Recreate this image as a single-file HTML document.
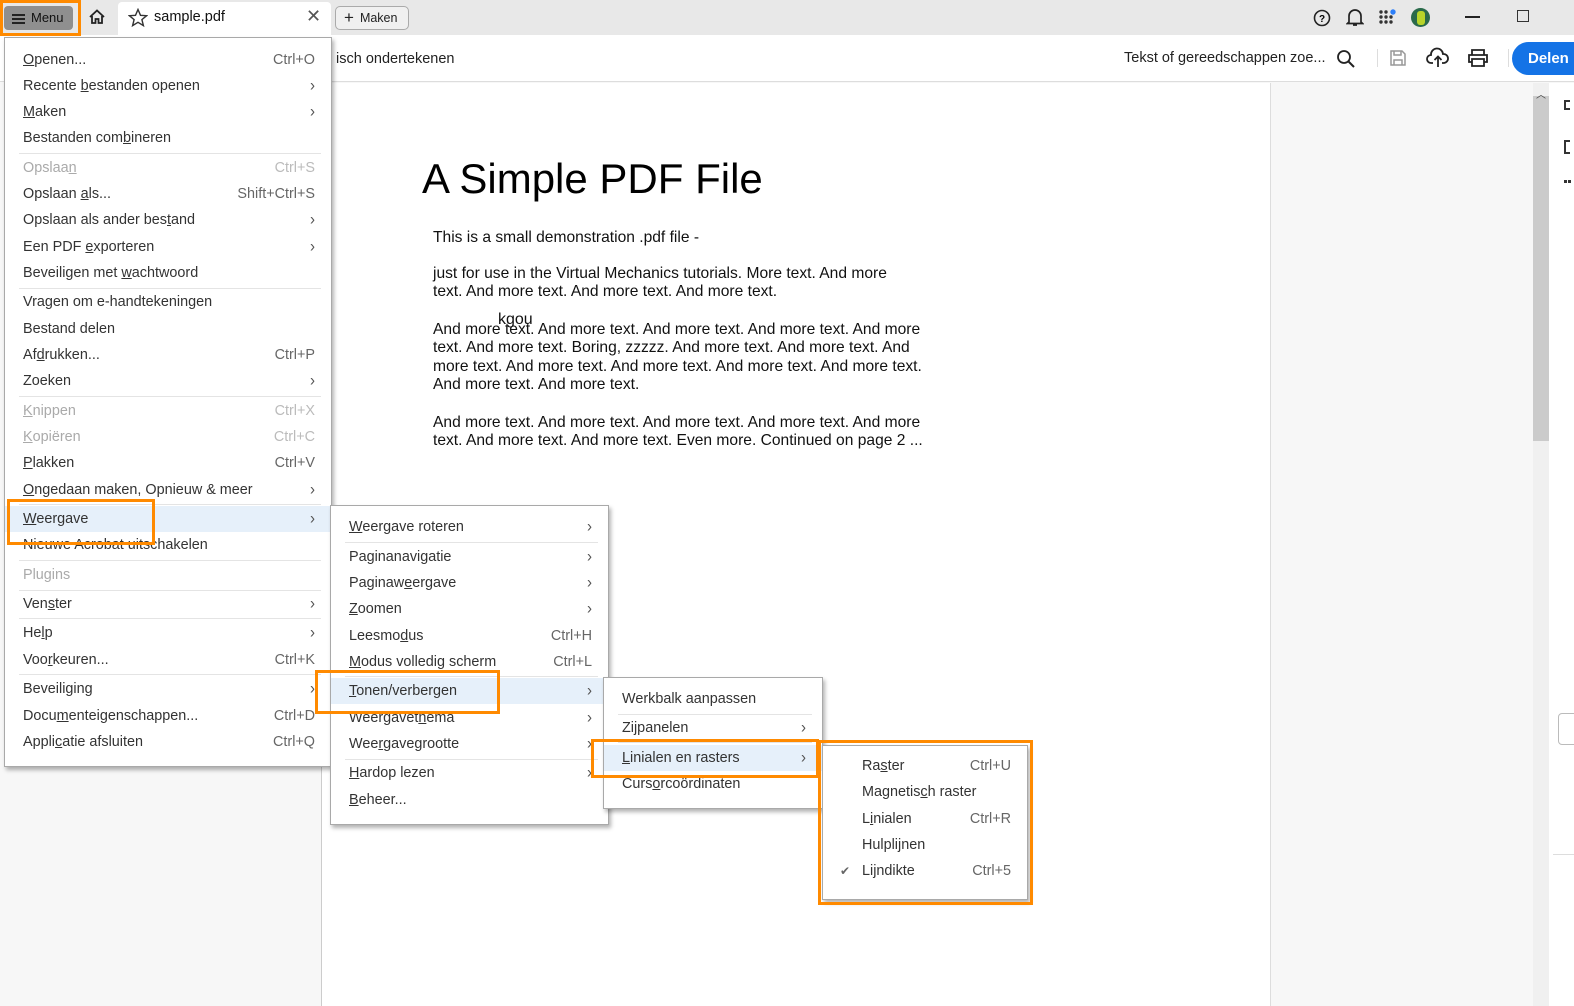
<!DOCTYPE html>
<html><head><meta charset="utf-8"><style>
*{margin:0;padding:0;box-sizing:border-box}
body{width:1574px;height:1006px;overflow:hidden;position:relative;font-family:"Liberation Sans",Arial,sans-serif;background:#f7f7f7;color:#222}
.abs{position:absolute}
.menu{position:absolute;background:#fff;border:1px solid #a9a9a9;box-shadow:2px 3px 4px rgba(0,0,0,.3)}
.i{position:absolute;left:0;right:0;height:26px;line-height:26px;font-size:14.4px;color:#333;padding-left:18px;white-space:nowrap}
.i .s{position:absolute;right:16px;top:0;color:#666}
.i .a{position:absolute;right:16px;top:0;color:#555;font-size:15px;transform:scaleY(1.1)}
.d{color:#aaa}.d .s{color:#bbb}
.sep{position:absolute;left:14px;right:10px;height:1px;background:#e4e4e4}
.hl{background:#e6f0fa}
.ob{position:absolute;border:3px solid #ff8a00}
.pt{position:absolute;font-size:15.6px;color:#111;line-height:18.3px;left:433px;white-space:nowrap}
</style></head><body>
<!-- top bar -->
<div class="abs" style="left:0;top:0;width:1574px;height:35px;background:#e8e8e8"></div>
<div class="abs" style="left:4px;top:6px;width:69px;height:24px;background:#8f8f8f;border-radius:4px;font-size:13px;line-height:24px;color:#111;padding-left:8px">
<span style="display:inline-block;width:13px;vertical-align:middle;border-top:2px solid #222;border-bottom:2px solid #222;height:10px;position:relative;margin-right:6px"><span style="position:absolute;left:0;right:0;top:2px;height:2px;background:#222"></span></span>Menu</div>
<svg class="abs" style="left:88px;top:8px" width="18" height="18" viewBox="0 0 18 18"><path d="M2 9 L9 2.5 L16 9 M4 8 V15 H7.5 V11 H10.5 V15 H14 V8" fill="none" stroke="#222" stroke-width="1.8"/></svg>
<div class="abs" style="left:118px;top:2px;width:213px;height:33px;background:#fff;border-radius:4px 4px 0 0"></div>
<svg class="abs" style="left:128px;top:8px" width="20" height="20" viewBox="0 0 20 20"><path d="M10 1.5 L12.5 7.3 L18.6 7.7 L13.9 11.6 L15.4 17.6 L10 14.3 L4.6 17.6 L6.1 11.6 L1.4 7.7 L7.5 7.3 Z" fill="none" stroke="#333" stroke-width="1.4"/></svg>
<div class="abs" style="left:154px;top:9px;font-size:14.5px;color:#111">sample.pdf</div>
<div class="abs" style="left:306px;top:6px;font-size:18px;color:#555">✕</div>
<div class="abs" style="left:335px;top:6px;width:74px;height:24px;border:1px solid #aaa;border-radius:5px;background:#f0f0f0;font-size:12.5px;line-height:22px;padding-left:8px;color:#222"><span style="font-size:17px;vertical-align:-1px;margin-right:6px">+</span>Maken</div>
<svg class="abs" style="left:1313px;top:9px" width="18" height="18" viewBox="0 0 18 18"><circle cx="9" cy="9" r="7.5" fill="none" stroke="#222" stroke-width="1.6"/><text x="9" y="13" font-size="10" text-anchor="middle" font-family="Liberation Sans" font-weight="bold">?</text></svg>
<svg class="abs" style="left:1346px;top:8px" width="18" height="20" viewBox="0 0 18 20"><path d="M3 14 V8 A6 6 0 0 1 15 8 V14 L16.5 15.5 H1.5 Z M7 17 H11" fill="none" stroke="#222" stroke-width="1.7"/></svg>
<svg class="abs" style="left:1378px;top:9px" width="20" height="18"><g fill="#333"><circle cx="3" cy="3" r="1.7"/><circle cx="8" cy="3" r="1.7"/><circle cx="3" cy="8" r="1.7"/><circle cx="8" cy="8" r="1.7"/><circle cx="13" cy="8" r="1.7"/><circle cx="3" cy="13" r="1.7"/><circle cx="8" cy="13" r="1.7"/><circle cx="13" cy="13" r="1.7"/></g><circle cx="15" cy="3" r="2.7" fill="#2d7ff9"/></svg>
<div class="abs" style="left:1411px;top:8px;width:19px;height:19px;border-radius:50%;background:#2a6a4a;overflow:hidden"><div style="margin:3px 0 0 6px;width:8px;height:14px;background:#b8d42a;border-radius:3px"></div></div>
<div class="abs" style="left:1465px;top:16px;width:15px;height:2px;background:#222"></div>
<div class="abs" style="left:1517px;top:10px;width:12px;height:12px;border:1.5px solid #333"></div>
<!-- toolbar -->
<div class="abs" style="left:0;top:35px;width:1574px;height:47px;background:#fff;border-bottom:1px solid #ddd"></div>
<div class="abs" style="left:336px;top:51px;font-size:14.5px;color:#222">isch ondertekenen</div>
<div class="abs" style="left:1124px;top:50px;font-size:14.5px;color:#222">Tekst of gereedschappen zoe...</div>
<svg class="abs" style="left:1336px;top:49px" width="20" height="20"><circle cx="8" cy="8" r="6" fill="none" stroke="#222" stroke-width="1.8"/><path d="M12.5 12.5 L18 18" stroke="#222" stroke-width="2"/></svg>
<div class="abs" style="left:1377px;top:49px;width:1px;height:18px;background:#ddd"></div>
<svg class="abs" style="left:1389px;top:49px" width="18" height="18"><path d="M2 2 H13 L16 5 V16 H2 Z M5 2 V6 H12 V2 M5 16 V11 H13 V16" fill="none" stroke="#999" stroke-width="1.5"/></svg>
<svg class="abs" style="left:1426px;top:47px" width="24" height="22"><path d="M7 16 H5 A4 4 0 0 1 5 8 A6 6 0 0 1 17 7 A4.5 4.5 0 0 1 18 16 H16 M12 20 V10 M8.5 13 L12 9.5 L15.5 13" fill="none" stroke="#222" stroke-width="1.8"/></svg>
<svg class="abs" style="left:1467px;top:48px" width="22" height="20"><path d="M5 7 V2 H17 V7 M5 14 H2 V7 H20 V14 H17 M5 11 H17 V18 H5 Z" fill="none" stroke="#222" stroke-width="1.8"/></svg>
<div class="abs" style="left:1508px;top:49px;width:1px;height:18px;background:#ddd"></div>
<div class="abs" style="left:1512px;top:42px;width:80px;height:33px;background:#1473e6;border-radius:17px;color:#fff;font-weight:bold;font-size:15px;line-height:33px;padding-left:16px">Delen</div>
<!-- page area -->
<div class="abs" style="left:321px;top:83px;width:950px;height:923px;background:#fff;border-left:1px solid #ccc;border-right:1px solid #ddd"></div>
<div class="abs" style="left:1533px;top:83px;width:16px;height:923px;background:#f0f0f0"></div>
<div class="abs" style="left:1533px;top:96px;width:16px;height:345px;background:#cbcbcb"></div>
<div class="abs" style="left:1536px;top:86px;font-size:10px;color:#444">︿</div>
<div class="abs" style="left:1549px;top:83px;width:25px;height:923px;background:#fff"></div>
<div class="abs" style="left:1564px;top:100px;width:6px;height:10px;border:2px solid #333;border-right:none"></div>
<div class="abs" style="left:1564px;top:140px;width:6px;height:14px;border:2px solid #333;border-right:none"></div>
<div class="abs" style="left:1564px;top:180px;width:4px;height:12px;border-top:3px dotted #333"></div>
<div class="abs" style="left:1558px;top:713px;width:20px;height:32px;border:1px solid #bbb;border-radius:4px;background:#fff"></div>
<div class="abs" style="left:1553px;top:854px;width:21px;height:1px;background:#ddd"></div>
<!-- pdf text -->
<div class="abs" style="left:422px;top:155px;font-size:42px;color:#000">A Simple PDF File</div>
<div class="pt" style="top:229px">This is a small demonstration .pdf file -</div>
<div class="pt" style="top:265px">just for use in the Virtual Mechanics tutorials. More text. And more<br>text. And more text. And more text. And more text.</div>
<div class="pt" style="top:321px">And more text. And more text. And more text. And more text. And more<br>text. And more text. Boring, zzzzz. And more text. And more text. And<br>more text. And more text. And more text. And more text. And more text.<br>And more text. And more text.</div>
<div class="abs" style="left:498px;top:311px;font-size:16px;color:#111">kgou</div>
<div class="pt" style="top:414px">And more text. And more text. And more text. And more text. And more<br>text. And more text. And more text. Even more. Continued on page 2 ...</div>

<!-- main menu -->
<div class="menu" style="left:4px;top:37px;width:328px;height:730px">
<div class="i" style="top:9px"><u>O</u>penen...<span class="s">Ctrl+O</span></div>
<div class="i" style="top:35px">Recente <u>b</u>estanden openen<span class="a">›</span></div>
<div class="i" style="top:61px"><u>M</u>aken<span class="a">›</span></div>
<div class="i" style="top:87px">Bestanden com<u>b</u>ineren</div>
<div class="sep" style="top:115px"></div>
<div class="i d" style="top:117px">Opslaa<u>n</u><span class="s">Ctrl+S</span></div>
<div class="i" style="top:143px">Opslaan <u>a</u>ls...<span class="s">Shift+Ctrl+S</span></div>
<div class="i" style="top:169px">Opslaan als ander bes<u>t</u>and<span class="a">›</span></div>
<div class="i" style="top:196px">Een PDF <u>e</u>xporteren<span class="a">›</span></div>
<div class="i" style="top:222px">Beveiligen met <u>w</u>achtwoord</div>
<div class="sep" style="top:250px"></div>
<div class="i" style="top:251px">Vragen om e-handtekeningen</div>
<div class="i" style="top:278px">Bestand delen</div>
<div class="i" style="top:304px">Af<u>d</u>rukken...<span class="s">Ctrl+P</span></div>
<div class="i" style="top:330px">Zoeken<span class="a">›</span></div>
<div class="sep" style="top:358px"></div>
<div class="i d" style="top:360px"><u>K</u>nippen<span class="s">Ctrl+X</span></div>
<div class="i d" style="top:386px"><u>K</u>opiëren<span class="s">Ctrl+C</span></div>
<div class="i" style="top:412px"><u>P</u>lakken<span class="s">Ctrl+V</span></div>
<div class="i" style="top:439px"><u>O</u>ngedaan maken, Opnieuw &amp; meer<span class="a">›</span></div>
<div class="sep" style="top:466px"></div>
<div class="i hl" style="top:468px"><u>W</u>eergave<span class="a">›</span></div>
<div class="i" style="top:494px">Nieuwe Acrobat uitschakelen</div>
<div class="sep" style="top:522px"></div>
<div class="i d" style="top:524px">Plugins</div>
<div class="sep" style="top:552px"></div>
<div class="i" style="top:553px">Ven<u>s</u>ter<span class="a">›</span></div>
<div class="sep" style="top:580px"></div>
<div class="i" style="top:582px">He<u>l</u>p<span class="a">›</span></div>
<div class="i" style="top:609px">Voo<u>r</u>keuren...<span class="s">Ctrl+K</span></div>
<div class="sep" style="top:636px"></div>
<div class="i" style="top:638px">Beveiliging<span class="a">›</span></div>
<div class="i" style="top:665px">Docu<u>m</u>enteigenschappen...<span class="s">Ctrl+D</span></div>
<div class="i" style="top:691px">Appli<u>c</u>atie afsluiten<span class="s">Ctrl+Q</span></div>
</div>

<!-- submenu 2 -->
<div class="menu" style="left:330px;top:505px;width:279px;height:320px">
<div class="i" style="top:8px"><u>W</u>eergave roteren<span class="a">›</span></div>
<div class="sep" style="top:36px"></div>
<div class="i" style="top:38px">Paginanavigatie<span class="a">›</span></div>
<div class="i" style="top:64px">Paginaw<u>e</u>ergave<span class="a">›</span></div>
<div class="i" style="top:90px"><u>Z</u>oomen<span class="a">›</span></div>
<div class="i" style="top:117px">Leesmo<u>d</u>us<span class="s">Ctrl+H</span></div>
<div class="i" style="top:143px"><u>M</u>odus volledig scherm<span class="s">Ctrl+L</span></div>
<div class="sep" style="top:170px"></div>
<div class="i hl" style="top:172px"><u>T</u>onen/verbergen<span class="a">›</span></div>
<div class="i" style="top:199px">Weergavet<u>h</u>ema<span class="a">›</span></div>
<div class="i" style="top:225px">Wee<u>r</u>gavegrootte<span class="a">›</span></div>
<div class="sep" style="top:253px"></div>
<div class="i" style="top:254px"><u>H</u>ardop lezen<span class="a">›</span></div>
<div class="i" style="top:281px"><u>B</u>eheer...</div>
</div>

<!-- submenu 3 -->
<div class="menu" style="left:603px;top:677px;width:220px;height:132px">
<div class="i" style="top:8px">Werkbalk aanpassen</div>
<div class="sep" style="top:36px"></div>
<div class="i" style="top:37px">Zijpanelen<span class="a">›</span></div>
<div class="sep" style="top:64px"></div>
<div class="i hl" style="top:67px"><u>L</u>inialen en rasters<span class="a">›</span></div>
<div class="i" style="top:93px">Curs<u>o</u>rcoördinaten</div>
</div>

<!-- submenu 4 -->
<div class="menu" style="left:822px;top:745px;width:206px;height:155px">
<div class="i" style="top:7px;padding-left:39px">Ra<u>s</u>ter<span class="s">Ctrl+U</span></div>
<div class="i" style="top:33px;padding-left:39px">Magnetis<u>c</u>h raster</div>
<div class="i" style="top:60px;padding-left:39px">L<u>i</u>nialen<span class="s">Ctrl+R</span></div>
<div class="i" style="top:86px;padding-left:39px">Hulplijnen</div>
<div class="i" style="top:112px;padding-left:39px"><span style="position:absolute;left:17px;color:#666;font-size:12px">✔</span>Lijndikte<span class="s">Ctrl+5</span></div>
</div>

<!-- orange boxes -->
<div class="ob" style="left:0;top:0;width:81px;height:36px"></div>
<div class="ob" style="left:7px;top:499px;width:148px;height:46px"></div>
<div class="ob" style="left:315px;top:670px;width:185px;height:44px"></div>
<div class="ob" style="left:591px;top:739px;width:228px;height:39px"></div>
<div class="ob" style="left:818px;top:740px;width:215px;height:165px"></div>
</body></html>
